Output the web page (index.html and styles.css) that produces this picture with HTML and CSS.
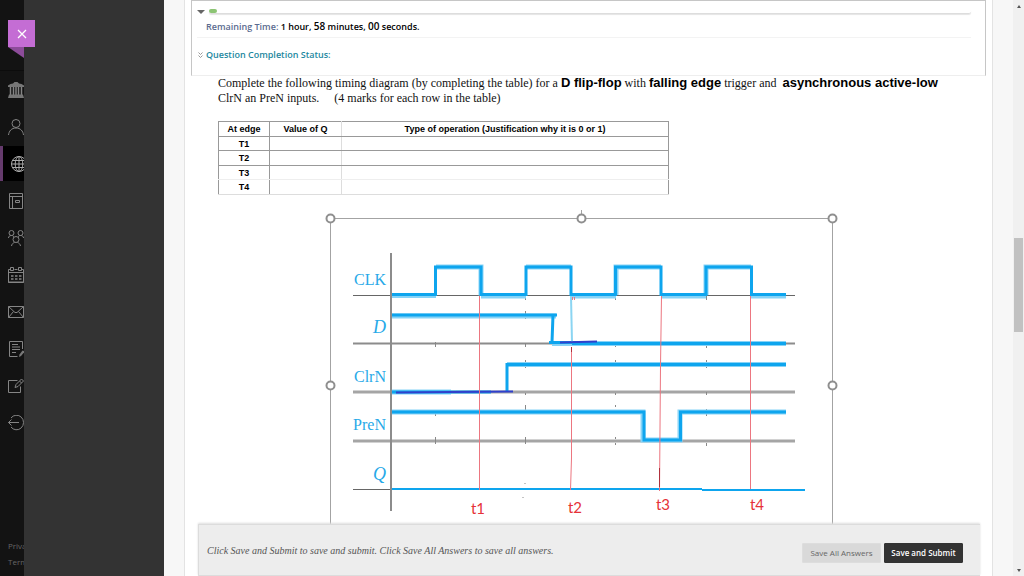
FILE: index.html
```html
<!DOCTYPE html>
<html lang="en">
<head>
<meta charset="utf-8">
<title>Test</title>
<link rel="stylesheet" href="styles.css">
</head>
<body>
<div class="app">
  <aside class="rail">
    <nav class="rail-nav" aria-label="Main">
      <a class="rail-link" href="#" aria-label="Institution"><svg class="icon" viewBox="0 0 16 16"><path d="M0 3.500L2.500 2 5 1.500 6.500 0h3L11 1.500l2.500.5L16 3.500V5H0z" class="fill"/><path d="M2.500 5v8M5.500 5v8M8 5v8M10.500 5v8M13.500 5v8" stroke-width="1.500"/><path d="M1 12.500h14L16 16H0z" class="fill"/></svg></a>
      <a class="rail-link" href="#" aria-label="Profile"><svg class="icon" viewBox="0 0 16 16"><circle cx="8" cy="4.500" r="4"/><path d="M.5 16c.5-4 3-7 7.500-7s7 3 7.500 7"/></svg></a>
      <a class="rail-link active" href="#" aria-label="Activity"><svg class="icon" viewBox="0 0 16 16"><circle cx="8" cy="8" r="7.500"/><ellipse cx="8" cy="8" rx="3.800" ry="7.500"/><path d="M8 .5v15M.5 8h15M1.500 4.500h13M1.500 11.500h13"/></svg></a>
      <a class="rail-link" href="#" aria-label="Courses"><svg class="icon" viewBox="0 0 16 16"><path d="M1.500.5h13v15h-13zM1.500 3.500h13M4.500 3.500v12M7.500 7.500h4v2h-4z"/></svg></a>
      <a class="rail-link" href="#" aria-label="Organizations"><svg class="icon" viewBox="0 0 16 16"><circle cx="3.500" cy="3" r="2.500"/><circle cx="12.500" cy="3" r="2.500"/><circle cx="8" cy="9.500" r="3"/><path d="M.5 8c0-1.500 1-2.500 3-2.500S5.500 6 5.500 7.500M15.500 8c0-1.500-1-2.500-3-2.500s-2 .5-2 2M3.500 16c.3-2 1.500-3 3-3.500M12.500 16c-.3-2-1.500-3-3-3.500"/></svg></a>
      <a class="rail-link" href="#" aria-label="Calendar"><svg class="icon" viewBox="0 0 16 16"><path d="M.5 2.500h2m4 0h3m4 0h2v13H.5v-13M.5 5.500h15M2.500.5h3v3h-3zM10.500.5h3v3h-3zM0 15h16"/><path d="M3 9h2.500M7 9h2.500M11 9h2.500M3 12h2.500M7 12h2.500M11 12h2.500" stroke-width="1.500"/></svg></a>
      <a class="rail-link" href="#" aria-label="Messages"><svg class="icon" viewBox="0 0 16 16"><path d="M.5 2.500h15v11H.5zM.5 2.500L7 8.500h2l6.500-6M.5 13.500l5-6M15.500 13.500l-5-6"/></svg></a>
      <a class="rail-link" href="#" aria-label="Grades"><svg class="icon" viewBox="0 0 16 16"><path d="M14.500 8V.5h-13v15h8M4 3.500h6M4 6h8M4 8.500h8M4 11.500h4"/><path d="M11 16l.5-2.500 3-4L16 10v1.500L13 15z" class="fill"/></svg></a>
      <a class="rail-link" href="#" aria-label="Tools"><svg class="icon" viewBox="0 0 16 16"><path d="M9.500 2.500h-9v12h12v-6M7 9.500l1-3 5.500-5.500 2 2L10 8.500zM11.500 3l2 2"/></svg></a>
      <a class="rail-link" href="#" aria-label="Sign out"><svg class="icon" viewBox="0 0 16 16"><path d="M3 3a7 7.300 0 1 1 0 9M.5 7.500H11M3.500 4.500l-3 3 3 3"/></svg></a>
    </nav>
    <div class="rail-legal"><a href="#">Privacy</a><a href="#">Terms</a></div>
    <button class="close" type="button" aria-label="Close"><svg class="close-icon" viewBox="0 0 10 10"><path d="M1 1l8 8M9 1L1 9"/></svg></button>
  </aside>
  <div class="panel"></div>
  <div class="stage">
    <main class="sheet">
      <section class="status">
        <div class="progress-row"><span class="caret"></span><div class="progress"><span class="progress-fill"></span></div></div>
        <p class="time"><span class="time-label">Remaining Time:</span> 1 hour, <span class="num">58</span> minutes, <span class="num">00</span> seconds.</p>
        <div class="completion"><svg class="chevrons" viewBox="0 0 5 6"><path d="M.5.5l2 2 2-2M.5 3.500l2 2 2-2"/></svg><a href="#">Question Completion Status:</a></div>
      </section>
      <section class="question">
        <p class="prompt">Complete the following timing diagram (by completing the table) for a <b>D flip-flop</b> with <b>falling edge</b> trigger and &nbsp;<b>asynchronous active-low</b><br>ClrN an PreN inputs. &nbsp;&nbsp;&nbsp; (4 marks for each row in the table)</p>
        <table class="answers">
          <colgroup><col class="col-edge"><col class="col-value"><col></colgroup>
          <thead><tr><th>At edge</th><th>Value of Q</th><th>Type of operation (Justification why it is 0 or 1)</th></tr></thead>
          <tbody>
            <tr><th>T1</th><td></td><td></td></tr>
            <tr><th>T2</th><td></td><td></td></tr>
            <tr><th>T3</th><td></td><td></td></tr>
            <tr><th>T4</th><td></td><td></td></tr>
          </tbody>
        </table>
        <svg class="timing" viewBox="325 210 514 316" role="img" aria-label="Timing diagram">
          <g class="frame"><path d="M330.500 526V218.500h502V526M581.500 210v8"/><circle cx="330.500" cy="218.500" r="4"/><circle cx="581.500" cy="218.500" r="4"/><circle cx="832.500" cy="218.500" r="4"/><circle cx="330.500" cy="385.500" r="4"/><circle cx="832.500" cy="385.500" r="4"/></g>
          <path class="thin-axis" d="M353 295.500h442M353 489.500h38"/>
          <path class="axis" d="M353 343.500h442" stroke-width="2"/>
          <path class="axis" d="M353 392h442M353 441h442" stroke-width="3"/>
          <path class="tick" d="M435.500 342v5M525.500 291v9M525.500 311v8M525.500 343v4M525.500 360v8M525.500 393v2M525.500 405v9M525.500 437v7M435.500 296v2M435.500 414v2M435.500 437v7M615.500 296v4M615.500 343v4M615.500 360v7M615.500 393v2M615.500 405v2M615.500 412v2M615.500 437v2M615.500 443v2M706.500 296v4M706.500 344v4M706.500 360v8M706.500 392v3M706.500 409v7M706.500 443v3M525 483v1M523 497v1"/>
          <g class="halo"><path d="M391 295.500h45M436 267h45v28.500M481 296h45M526 267h45M571 296h45M616 295V267h45M661 296h45M706 295V267h45M751 296h35M391 316h165M552 343.500h234M391 392h60M507 364.500h279M391 412h252v28h37v-28h106"/></g>
          <g class="wave">
            <path d="M391 294.500h44.500V267h45.500v27.500h45V267h45v27.500h44.500V267h45.500v27.500h45V267h45.500v27.500H786"/>
            <path d="M391 315h166M553 315l-1 27M549 342.500h36M572 343.500h214"/>
            <path d="M391 392h100M507 392v-27.500h279"/>
            <path d="M391 412h253v28h36.500v-28H786"/>
            <path d="M391 489h311M702 490h103" stroke-width="2"/>
          </g>
          <path class="ghost" d="M571 296l1 47"/>
          <path class="ink" d="M396 392.500l117-1M560 342.500l37-1"/>
          <path class="axis" d="M391 253v258" stroke-width="2"/>
          <path class="marker" d="M479.500 296v194M571.500 349v109l-1 32M661.500 296l-1 70-1 125M750.500 296v193M572.500 297v3M574.500 297v3"/>
          <path class="marker-dark" d="M571.500 347v5M659.500 468v19"/>
          <g class="signal" text-anchor="end"><text x="386" y="285">CLK</text><text x="386" y="333" class="slant">D</text><text x="386" y="382">ClrN</text><text x="386" y="430">PreN</text><text x="386" y="480" class="slant">Q</text></g>
          <g class="instant" text-anchor="middle"><text x="478" y="514">t1</text><text x="575" y="513">t2</text><text x="663" y="510">t3</text><text x="757" y="510">t4</text></g>
        </svg>
      </section>
      <footer class="submit-bar">
        <p class="hint">Click Save and Submit to save and submit. Click Save All Answers to save all answers.</p>
        <div class="actions"><button class="btn" type="button">Save All Answers</button><button class="btn primary" type="button">Save and Submit</button></div>
      </footer>
    </main>
  </div>
  <div class="scrollbar"><span class="arrow up"></span><span class="thumb"></span><span class="arrow down"></span></div>
</div>
</body>
</html>
```
FILE: styles.css
```css
* { box-sizing: border-box; }
body { margin: 0; font-family: "Open Sans", sans-serif; background: #f7f7f7; }
p { margin: 0; }
a { text-decoration: none; }
.app { display: flex; height: 100vh; overflow: hidden; }

.rail { position: relative; flex: none; display: flex; flex-direction: column; width: 24px; background: #131313; }
.rail-nav { display: flex; flex-direction: column; gap: 2px; margin-top: 70px; padding-top: 1px; border-top: 1px solid #0c0c0c; overflow: hidden; }
.rail-link { flex: none; display: flex; align-items: center; height: 35px; padding-left: 8px; }
.rail-link.active { background: #000; border-left: 3px solid #643a6c; }
.icon { flex: none; width: 16px; height: 16px; fill: none; stroke: #858585; stroke-width: 1; }
.icon .fill { fill: #777; stroke: none; }
.rail-link.active .icon { stroke: #aaa; }
.rail-legal { display: flex; flex-direction: column; margin-top: auto; padding: 0 0 6px 8px; overflow: hidden; font-size: 8px; line-height: 16px; }
.rail-legal a { color: #666; }
.close { position: absolute; left: 8px; top: 20px; z-index: 1; display: flex; align-items: center; justify-content: center; width: 27px; height: 27px; padding: 0; border: 0; background: #c46dd4; }
.close::after { content: ""; position: absolute; left: 0; top: 100%; width: 16px; height: 11px; background: #8d4c9a; clip-path: polygon(0 0, 100% 0, 100% 100%); }
.close-icon { width: 10px; height: 10px; stroke: #fff; stroke-width: 1.3; fill: none; }
.panel { flex: none; width: 140px; background: #333; }

.stage { flex: 1; min-width: 0; padding: 0 20px; display: flex; }
.sheet { flex: 1; min-width: 0; display: flex; flex-direction: column; background: #fff; border: solid #e3e3e3; border-width: 0 1px; }

.status { flex: none; margin: 0 6px; padding: 8px 14px 12px 5px; border: 1px solid #c6c6c6; border-bottom-color: #eee; }
.progress-row { display: flex; align-items: center; gap: 4px; }
.caret { border: 4px solid transparent; border-top-color: #666; border-bottom: 0; }
.progress { flex: 1; height: 5px; border-radius: 3px; border-bottom: 1px solid #ddd; box-shadow: 0 1px 1px #e5e5e5; }
.progress-fill { display: block; width: 8px; height: 4px; border-radius: 2px; background: #8cc474; }
.time { padding: 4px 0 2px 9px; border-bottom: 1px solid #f3f3f3; font-size: 9px; line-height: 16px; font-weight: 600; color: #000; }
.time-label { color: #5b6b8f; }
.num { font-size: 10px; }
.completion { display: flex; align-items: center; gap: 3px; margin-top: 9px; padding-left: 1px; font-size: 9px; line-height: 16px; font-weight: 600; }
.completion a { color: #1d88a0; }
.chevrons { width: 5px; height: 6px; fill: none; stroke: #999; stroke-width: 1; }

.question { flex: 1; min-height: 0; padding-left: 33px; overflow: hidden; }
.prompt { font: 12px/15px "Liberation Serif", serif; color: #111; white-space: nowrap; }
.prompt b { font-family: "Liberation Sans", sans-serif; font-size: 13px; line-height: 12px; color: #000; }
.answers { width: 451px; margin-top: 15px; table-layout: fixed; border-collapse: collapse; font: 700 9px/12px "Liberation Sans", sans-serif; color: #000; }
.answers th, .answers td { height: 15px; padding: 0; border: 1px solid #999; text-align: center; }
.answers tbody tr:nth-child(odd) > * { height: 14px; }
.answers tbody tr:nth-child(3) > * { border-bottom-color: #eee; }
.answers tbody tr:nth-child(4) > * { border-bottom-color: #ddd; }
.answers td:nth-child(2), .answers thead th:nth-child(2) { border-right-color: #ddd; }
.col-edge { width: 51px; }
.col-value { width: 72px; }

.timing { display: block; width: 514px; margin: 15px 0 0 107px; fill: none; }
.frame { stroke: #a3a3a3; }
.frame circle { fill: #fff; stroke: #8f8f8f; stroke-width: 2; }
.thin-axis { stroke: #666; stroke-width: 1; }
.axis { stroke: #8c8c8c; }
.axis[stroke-width="3"] { stroke: #a5a5a5; }
.tick { stroke: #888; stroke-width: 1; }
.halo { stroke: #86d3f7; stroke-width: 5; }
.wave { stroke: #0ea5ee; stroke-width: 3; }
.ghost { stroke: #8bd5f2; stroke-width: 2; }
.ink { stroke: #3040cc; stroke-width: 2; }
.marker { stroke: #ec7680; stroke-width: 1; }
.marker-dark { stroke: #b0303c; stroke-width: 1; }
.signal { fill: #27a9e8; stroke: none; font: 16px "Liberation Serif", serif; }
.slant { font-style: italic; font-size: 18px; }
.instant { fill: #e63238; stroke: none; font: 15px Lato, sans-serif; }

.submit-bar { flex: none; display: flex; align-items: center; justify-content: space-between; margin: 0 12px 0 13px; padding: 18px 17px 12px 8px; border: solid #dcdcdc; border-width: 1px 0 1px 1px; background: #ededed; box-shadow: 0 -1px 2px #ddd; }
.hint { padding-bottom: 4px; font: italic 10px/16px "Liberation Serif", serif; color: #555; }
.actions { display: flex; gap: 3px; }
.btn { height: 20px; width: 79px; padding: 0; border: 1px solid #ddd; border-radius: 1px; background: #d9d9d9; color: #666; font: 8px/16px "Open Sans", sans-serif; white-space: nowrap; }
.btn.primary { border-color: #333; background: #333; color: #fff; font-weight: 600; }

.scrollbar { flex: none; display: flex; flex-direction: column; align-items: center; width: 11px; padding: 5px 0 4px; background: #f0f0f0; }
.arrow { border: 2px solid transparent; }
.arrow.up { border-bottom: 3px solid #555; border-top: 0; }
.arrow.down { border-top: 3px solid #555; border-bottom: 0; margin-top: auto; }
.thumb { width: 9px; height: 94px; margin-top: 230px; background: #c1c1c1; }
```
